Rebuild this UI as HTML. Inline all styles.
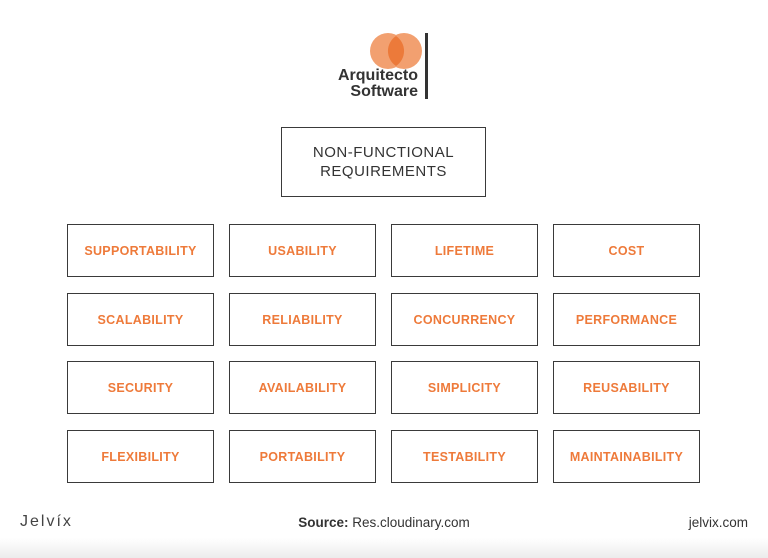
<!DOCTYPE html>
<html><head><style>
body{margin:0;width:768px;height:558px;background:#fff;position:relative;overflow:hidden;font-family:"Liberation Sans",sans-serif}
.b{position:absolute;width:145px;height:51px;border:1.5px solid #3a3a3a;display:flex;align-items:center;justify-content:center;color:#ee7a3a;font-weight:bold;font-size:12.5px;letter-spacing:0.3px}
.t{position:absolute;left:281px;top:127px;width:203px;height:68px;border:1.5px solid #3a3a3a;display:flex;align-items:center;justify-content:center;text-align:center;color:#333;font-size:15px;line-height:19px;letter-spacing:0.5px}
</style></head><body>
<svg style="position:absolute;left:360px;top:28px" width="80" height="75">
<circle cx="28" cy="23" r="18" fill="#f2a070"/>
<circle cx="44" cy="23" r="18" fill="#f2a070"/>
<path d="M36 8 A18 18 0 0 1 36 38 A18 18 0 0 1 36 8Z" fill="#ec7a3a"/>
<rect x="65" y="5" width="3" height="66" fill="#333"/>
</svg>
<div style="position:absolute;left:318px;top:68px;width:100px;text-align:right;font-weight:bold;font-size:16px;line-height:16px;color:#333">Arquitecto<br>Software</div>
<div class="t">NON-FUNCTIONAL<br>REQUIREMENTS</div>
<div class="b" style="left:67px;top:224px">SUPPORTABILITY</div>
<div class="b" style="left:229px;top:224px">USABILITY</div>
<div class="b" style="left:391px;top:224px">LIFETIME</div>
<div class="b" style="left:553px;top:224px">COST</div>
<div class="b" style="left:67px;top:293px">SCALABILITY</div>
<div class="b" style="left:229px;top:293px">RELIABILITY</div>
<div class="b" style="left:391px;top:293px">CONCURRENCY</div>
<div class="b" style="left:553px;top:293px">PERFORMANCE</div>
<div class="b" style="left:67px;top:361px">SECURITY</div>
<div class="b" style="left:229px;top:361px">AVAILABILITY</div>
<div class="b" style="left:391px;top:361px">SIMPLICITY</div>
<div class="b" style="left:553px;top:361px">REUSABILITY</div>
<div class="b" style="left:67px;top:430px">FLEXIBILITY</div>
<div class="b" style="left:229px;top:430px">PORTABILITY</div>
<div class="b" style="left:391px;top:430px">TESTABILITY</div>
<div class="b" style="left:553px;top:430px">MAINTAINABILITY</div>
<div style="position:absolute;left:20px;top:513px;font-size:16px;color:#444;letter-spacing:2px">Jelvíx</div>
<div style="position:absolute;left:0;width:768px;top:515px;text-align:center;font-size:13.5px;color:#333"><b>Source:</b> Res.cloudinary.com</div>
<div style="position:absolute;right:20px;top:515px;font-size:13.5px;color:#333">jelvix.com</div>
<div style="position:absolute;left:0;top:538px;width:768px;height:20px;background:linear-gradient(#fff,#ececec)"></div>
</body></html>
